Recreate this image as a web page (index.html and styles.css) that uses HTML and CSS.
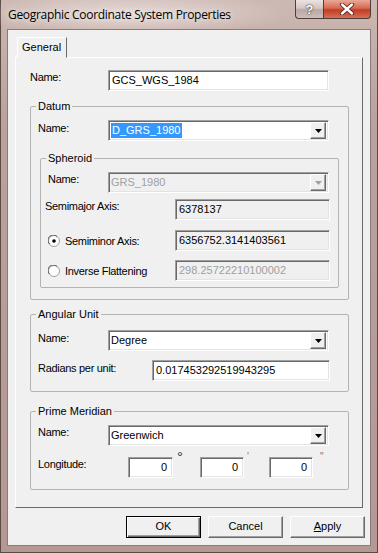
FILE: index.html
```html
<!DOCTYPE html>
<html lang="en">
<head>
    <meta charset="UTF-8">
    <title>Geographic Coordinate System Properties</title>
    <link rel="stylesheet" href="styles.css">
</head>
<body>
    <div class="window">
        <div class="titlebar">
            <span class="title">Geographic Coordinate System Properties</span>
            <div class="caption">
                <span class="cap help">?</span>
                <span class="cap close">
                    <svg width="16" height="12" viewBox="0 0 16 12">
                        <path d="M3 1.5 L13 10.5 M13 1.5 L3 10.5" stroke="#5a2418" stroke-width="4.2" stroke-linecap="round"/>
                        <path d="M3 1.5 L13 10.5 M13 1.5 L3 10.5" stroke="#fff" stroke-width="2.4" stroke-linecap="round"/>
                    </svg>
                </span>
            </div>
        </div>

        <div class="client">
            <div class="tabs"><span class="tab">General</span></div>

            <div class="tabpage">
                <div class="row">
                    <label class="lbl" style="width:78px">Name:</label>
                    <div class="field" style="width:221px">GCS_WGS_1984</div>
                </div>

                <div class="group datum">
                    <div class="group-title">Datum</div>
                    <div class="row mt7">
                        <label class="lbl ml7 top1" style="width:70px">Name:</label>
                        <div class="field combo" style="width:221px">
                            <span class="sel">D_GRS_1980</span>
                            <span class="drop"><svg width="7" height="4" viewBox="0 0 7 4"><path d="M0 0 H7 L3.5 4 Z" fill="#000"/></svg></span>
                        </div>
                    </div>

                    <div class="group spheroid">
                        <div class="group-title">Spheroid</div>
                        <div class="row mt7">
                            <label class="lbl ml7" style="width:60px">Name:</label>
                            <div class="field combo disabled" style="width:221px">
                                <span>GRS_1980</span>
                                <span class="drop"><svg width="7" height="4" viewBox="0 0 7 4"><path d="M0 0 H7 L3.5 4 Z" fill="#a0a0a0"/></svg></span>
                            </div>
                        </div>
                        <div class="row mt6">
                            <label class="lbl ml4" style="width:130px">Semimajor Axis:</label>
                            <div class="field readonly" style="width:155px">6378137</div>
                        </div>
                        <div class="row mt10 center">
                            <span class="radio ml7">
                                <svg width="12" height="12" viewBox="0 0 12 12">
                                    <circle cx="6" cy="6" r="5.5" fill="#fff" stroke="#a0a0a0"/>
                                    <path d="M1.5 9 A4.5 4.5 0 0 1 9 1.5" fill="none" stroke="#555" stroke-width="1"/>
                                    <circle cx="6" cy="6" r="1.8" fill="#000"/>
                                </svg>
                            </span>
                            <label class="lbl" style="width:110px">Semiminor Axis:</label>
                            <div class="field readonly" style="width:155px">6356752.3141403561</div>
                        </div>
                        <div class="row mt9 center">
                            <span class="radio ml7">
                                <svg width="12" height="12" viewBox="0 0 12 12">
                                    <circle cx="6" cy="6" r="5.5" fill="#fff" stroke="#a0a0a0"/>
                                    <path d="M1.5 9 A4.5 4.5 0 0 1 9 1.5" fill="none" stroke="#555" stroke-width="1"/>
                                </svg>
                            </span>
                            <label class="lbl" style="width:110px">Inverse Flattening</label>
                            <div class="field disabled" style="width:155px">298.25722210100002</div>
                        </div>
                    </div>
                </div>

                <div class="group angular">
                    <div class="group-title">Angular Unit</div>
                    <div class="row mt9">
                        <label class="lbl ml7 top1" style="width:70px">Name:</label>
                        <div class="field combo" style="width:221px">
                            <span>Degree</span>
                            <span class="drop"><svg width="7" height="4" viewBox="0 0 7 4"><path d="M0 0 H7 L3.5 4 Z" fill="#000"/></svg></span>
                        </div>
                    </div>
                    <div class="row mt9">
                        <label class="lbl ml7 top1" style="width:114px">Radians per unit:</label>
                        <div class="field" style="width:178px">0.017453292519943295</div>
                    </div>
                </div>

                <div class="group meridian">
                    <div class="group-title">Prime Meridian</div>
                    <div class="row mt7">
                        <label class="lbl ml7" style="width:70px">Name:</label>
                        <div class="field combo" style="width:221px">
                            <span>Greenwich</span>
                            <span class="drop"><svg width="7" height="4" viewBox="0 0 7 4"><path d="M0 0 H7 L3.5 4 Z" fill="#000"/></svg></span>
                        </div>
                    </div>
                    <div class="row mt11">
                        <label class="lbl ml7" style="width:90px">Longitude:</label>
                        <div class="field num" style="width:45px">0</div>
                        <span class="sym deg">&deg;</span>
                        <div class="field num" style="width:44px">0</div>
                        <span class="sym min">'</span>
                        <div class="field num" style="width:44px">0</div>
                        <span class="sym sec">"</span>
                    </div>
                </div>
            </div>

            <div class="buttons">
                <span class="btn default">OK</span>
                <span class="btn">Cancel</span>
                <span class="btn"><u>A</u>pply</span>
            </div>
        </div>
    </div>
</body>
</html>
```

FILE: styles.css
```css
body { margin: 0; font-family: "Liberation Sans", Arial, sans-serif; font-size: 11px; color: #000; background: #b9a19b; }

.window {
    width: 378px;
    height: 553px;
    box-sizing: border-box;
    display: flex;
    flex-direction: column;
    background: linear-gradient(to bottom, #cdb9b4 0, #c8b2ac 29px, #bba29c 120px, #b39893 100%);
    box-shadow: inset 1px 0 0 #5c4a46, inset -1px 0 0 #5c4a46, inset 0 -1px 0 #5c4a46;
}

/* Title bar */
.titlebar { height: 29px; display: flex; justify-content: space-between; align-items: flex-start; background: radial-gradient(ellipse 160px 22px at 130px 14px, rgba(240,230,228,0.75), rgba(240,230,228,0) 100%); }
.title { font-family: "Open Sans", "Liberation Sans", sans-serif; font-size: 12px; line-height: 14px; margin: 8px 0 0 8px; letter-spacing: -0.3px; text-shadow: 0 0 6px rgba(255,255,255,0.9); }
.caption { display: flex; margin-right: 7px; }
.cap { height: 19px; box-sizing: border-box; border: 1px solid #4e3e3b; border-top: none; display: flex; align-items: center; justify-content: center; }
.help {
    width: 28px;
    border-right: none;
    border-radius: 0 0 0 4px;
    background: linear-gradient(to bottom, #ece3e1 0, #d4c6c3 45%, #b9a8a4 55%, #cdbfbc 100%);
    color: #fff;
    font-weight: bold;
    font-size: 13px;
    text-shadow: 0 0 2px #3d302d, 0 0 1px #3d302d;
}
.close {
    width: 48px;
    border-radius: 0 0 4px 0;
    background: linear-gradient(to bottom, #eaa898 0, #d66b52 45%, #c13d24 55%, #d66f57 100%);
}

/* Client area */
.client { flex: 1; margin: 0 7px 7px; border: 1px solid #8a7c79; background: #f0f0f0; display: flex; flex-direction: column; }

.tabs { display: flex; padding: 7px 0 0 9px; }
.tab {
    width: 50px;
    height: 21px;
    box-sizing: border-box;
    border: 1px solid;
    border-color: #fff #696969 transparent #fff;
    background: #f0f0f0;
    margin-bottom: -1px;
    padding-left: 4px;
    line-height: 19px;
    position: relative;
    z-index: 1;
}

.tabpage {
    margin-left: 7px;
    width: 348px;
    height: 451px;
    box-sizing: border-box;
    border: 1px solid;
    border-color: #fff #696969 #696969 #fff;
    padding: 12px 13px 0 14px;
}

.row { display: flex; align-items: flex-start; }
.row.center { align-items: center; }
.lbl { line-height: 14px; letter-spacing: -0.3px; flex-shrink: 0; white-space: nowrap; }
.ml4 { margin-left: 4px; }
.ml7 { margin-left: 7px; }
.top1 { margin-top: 1px; }
.mt6 { margin-top: 6px; }
.mt7 { margin-top: 7px; }
.mt9 { margin-top: 9px; }
.mt10 { margin-top: 10px; }
.mt11 { margin-top: 11px; }

/* Group boxes */
.group { border: 1px solid #b4b4b4; border-radius: 2px; }
.group-title { width: fit-content; margin: -8px 0 0 5px; padding: 0 2px; line-height: 14px; background: #f0f0f0; }
.datum { margin-top: 15px; padding-bottom: 11px; }
.spheroid { margin: 17px 9px 0; padding-bottom: 6px; }
.angular { margin-top: 14px; padding-bottom: 10px; }
.meridian { margin-top: 19px; padding-bottom: 11px; }

/* Edit fields */
.field {
    height: 21px;
    box-sizing: border-box;
    border: 1px solid;
    border-color: #a0a0a0 #fff #fff #a0a0a0;
    box-shadow: inset 1px 1px 0 #696969, inset -1px -1px 0 #e3e3e3;
    background: #fff;
    padding: 0 3px;
    line-height: 19px;
    white-space: nowrap;
    overflow: hidden;
    flex-shrink: 0;
}
.field.readonly { background: #f0f0f0; }
.field.disabled { background: #f0f0f0; color: #a0a0a0; }
.field.num { text-align: right; padding-right: 5px; }

.combo { display: flex; justify-content: space-between; align-items: center; padding: 0 2px 0 2px; }
.sel { background: #3399ff; color: #fff; line-height: 15px; padding: 0 1px; }
.drop {
    width: 16px;
    height: 17px;
    box-sizing: border-box;
    border: 1px solid;
    border-color: #fff #696969 #696969 #fff;
    box-shadow: inset -1px -1px 0 #a0a0a0;
    background: #f0f0f0;
    display: flex;
    align-items: center;
    justify-content: center;
}

.radio { width: 12px; height: 12px; margin-right: 5px; display: flex; }

.sym { flex-shrink: 0; margin-top: -7px; line-height: 14px; color: #333; }
.deg { width: 27px; padding-left: 4px; box-sizing: border-box; font-size: 15px; }
.min { width: 25px; padding-left: 3px; box-sizing: border-box; font-size: 10px; color: #777; }
.sec { padding-left: 7px; font-size: 10px; color: #777; }

/* Dialog buttons */
.buttons { display: flex; justify-content: flex-end; gap: 7px; margin-top: 8px; padding-right: 5px; }
.btn {
    width: 75px;
    height: 22px;
    box-sizing: border-box;
    border: 1px solid;
    border-color: #fff #696969 #696969 #fff;
    box-shadow: inset -1px -1px 0 #a0a0a0;
    background: #f0f0f0;
    text-align: center;
    line-height: 19px;
    font-size: 11px;
}
.btn.default {
    border-color: #000;
    box-shadow: inset 1px 1px 0 #fff, inset -1px -1px 0 #696969, inset -2px -2px 0 #a0a0a0;
}
```
